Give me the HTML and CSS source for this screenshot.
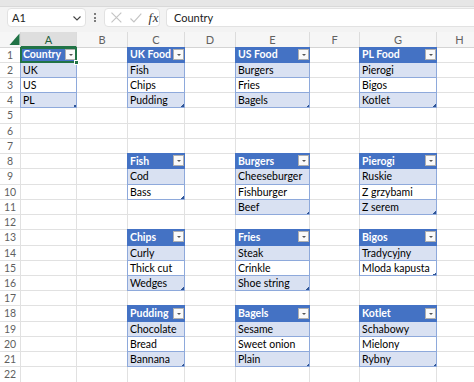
FILE: index.html
```html
<!DOCTYPE html>
<html>
<head>
<meta charset="utf-8">
<link rel="stylesheet" href="styles.css">
</head>
<body>
<div class="app">
  <div class="ribbon"></div>
  <div class="fbar">
    <div class="namebox"><span>A1</span><svg class="chev" width="8" height="5" viewBox="0 0 8 5"><polyline points="0.5,0.5 4,4 7.5,0.5" fill="none" stroke="#444" stroke-width="1.1"/></svg></div>
    <div class="dots"><i></i><i></i><i></i></div>
    <div class="fxbox">
      <svg width="11" height="11" viewBox="0 0 11 11"><path d="M0.5 0.5 L10.5 10.5 M10.5 0.5 L0.5 10.5" stroke="#c4c4c4" stroke-width="1.2"/></svg>
      <svg width="12" height="10" viewBox="0 0 12 10"><polyline points="0.5,5.5 4,9 11.5,0.5" fill="none" stroke="#c4c4c4" stroke-width="1.2"/></svg>
      <span class="fx">fx</span>
    </div>
    <div class="formula">Country</div>
  </div>
  <div class="sheet">
    <div class="cl c1"></div><div class="cl c2"></div><div class="cl c3"></div><div class="cl c4"></div><div class="cl c5"></div><div class="cl c6"></div><div class="cl c7"></div><div class="cl c8"></div><div class="cl c9"></div>

    <div class="rl g1"><span class="rn">1</span></div>
    <div class="rl g2"><span class="rn">2</span></div>
    <div class="rl g3"><span class="rn">3</span></div>
    <div class="rl g4"><span class="rn">4</span></div>
    <div class="rl g5"><span class="rn">5</span></div>
    <div class="rl g6"><span class="rn">6</span></div>
    <div class="rl g7"><span class="rn">7</span></div>
    <div class="rl g8"><span class="rn">8</span></div>
    <div class="rl g9"><span class="rn">9</span></div>
    <div class="rl g10"><span class="rn">10</span></div>
    <div class="rl g11"><span class="rn">11</span></div>
    <div class="rl g12"><span class="rn">12</span></div>
    <div class="rl g13"><span class="rn">13</span></div>
    <div class="rl g14"><span class="rn">14</span></div>
    <div class="rl g15"><span class="rn">15</span></div>
    <div class="rl g16"><span class="rn">16</span></div>
    <div class="rl g17"><span class="rn">17</span></div>
    <div class="rl g18"><span class="rn">18</span></div>
    <div class="rl g19"><span class="rn">19</span></div>
    <div class="rl g20"><span class="rn">20</span></div>
    <div class="rl g21"><span class="rn">21</span></div>
    <div class="rl g22"><span class="rn">22</span></div>

    <div class="corner c1"><svg width="21" height="16" viewBox="0 0 21 16"><polygon points="9.5,13 19.5,13 19.5,1.5" fill="#217346"/></svg></div>
    <div class="ch c2 sel-col">A</div>
    <div class="ch c3">B</div>
    <div class="ch c4">C</div>
    <div class="ch c5">D</div>
    <div class="ch c6">E</div>
    <div class="ch c7">F</div>
    <div class="ch c8">G</div>
    <div class="ch c9">H</div>

    <div class="tbl c2 row1 span4">
      <div class="tr th"><span>Country</span><b class="dd"></b></div>
      <div class="tr odd">UK</div>
      <div class="tr">US</div>
      <div class="tr odd last">PL</div>
    </div>
    <div class="tbl c4 row1 span4">
      <div class="tr th"><span>UK Food</span><b class="dd"></b></div>
      <div class="tr odd">Fish</div>
      <div class="tr">Chips</div>
      <div class="tr odd last">Pudding</div>
    </div>
    <div class="tbl c6 row1 span4">
      <div class="tr th"><span>US Food</span><b class="dd"></b></div>
      <div class="tr odd">Burgers</div>
      <div class="tr">Fries</div>
      <div class="tr odd last">Bagels</div>
    </div>
    <div class="tbl c8 row1 span4">
      <div class="tr th"><span>PL Food</span><b class="dd"></b></div>
      <div class="tr odd">Pierogi</div>
      <div class="tr">Bigos</div>
      <div class="tr odd last">Kotlet</div>
    </div>

    <div class="tbl c4 row8 span3">
      <div class="tr th"><span>Fish</span><b class="dd"></b></div>
      <div class="tr odd">Cod</div>
      <div class="tr last">Bass</div>
    </div>
    <div class="tbl c6 row8 span4">
      <div class="tr th"><span>Burgers</span><b class="dd"></b></div>
      <div class="tr odd">Cheeseburger</div>
      <div class="tr">Fishburger</div>
      <div class="tr odd last">Beef</div>
    </div>
    <div class="tbl c8 row8 span4">
      <div class="tr th"><span>Pierogi</span><b class="dd"></b></div>
      <div class="tr odd">Ruskie</div>
      <div class="tr">Z grzybami</div>
      <div class="tr odd last">Z serem</div>
    </div>

    <div class="tbl c4 row13 span4">
      <div class="tr th"><span>Chips</span><b class="dd"></b></div>
      <div class="tr odd">Curly</div>
      <div class="tr">Thick cut</div>
      <div class="tr odd last">Wedges</div>
    </div>
    <div class="tbl c6 row13 span4">
      <div class="tr th"><span>Fries</span><b class="dd"></b></div>
      <div class="tr odd">Steak</div>
      <div class="tr">Crinkle</div>
      <div class="tr odd last">Shoe string</div>
    </div>
    <div class="tbl c8 row13 span3">
      <div class="tr th"><span>Bigos</span><b class="dd"></b></div>
      <div class="tr odd">Tradycyjny</div>
      <div class="tr last">Mloda kapusta</div>
    </div>

    <div class="tbl c4 row18 span4">
      <div class="tr th"><span>Pudding</span><b class="dd"></b></div>
      <div class="tr odd">Chocolate</div>
      <div class="tr">Bread</div>
      <div class="tr odd last">Bannana</div>
    </div>
    <div class="tbl c6 row18 span4">
      <div class="tr th"><span>Bagels</span><b class="dd"></b></div>
      <div class="tr odd">Sesame</div>
      <div class="tr">Sweet onion</div>
      <div class="tr odd last">Plain</div>
    </div>
    <div class="tbl c8 row18 span4">
      <div class="tr th"><span>Kotlet</span><b class="dd"></b></div>
      <div class="tr odd">Schabowy</div>
      <div class="tr">Mielony</div>
      <div class="tr odd last">Rybny</div>
    </div>

    <div class="selection c2 g1"><i class="handle"></i></div>
  </div>
</div>
</body>
</html>
```

FILE: styles.css
```css
* { box-sizing: border-box; margin: 0; padding: 0; }
html, body { width: 474px; height: 382px; overflow: hidden; background: #fff; }
body { font-family: "Lato", "Liberation Sans", sans-serif; color: #000; }

.app { width: 474px; height: 382px; overflow: hidden; display: flex; flex-direction: column; }

.ribbon { height: 7px; flex: none; background: #e6e6e6; border-bottom: 1px solid #d9d9d9; }

.fbar { height: 24.5px; flex: none; background: #f3f3f3; display: flex; align-items: flex-start; padding: 1px 0 0 7px; }
.namebox { width: 79px; height: 19px; background: #fff; border: 1px solid #e2e2e2; border-radius: 4px; display: flex; align-items: center; justify-content: space-between; padding: 0 4px 0 4px; font-size: 11px; color: #222; }
.namebox .chev { margin-top: 1px; }
.dots { width: 18px; height: 19px; display: flex; flex-direction: column; align-items: center; justify-content: center; gap: 1.5px; }
.dots i { width: 2px; height: 2px; background: #555; border-radius: 1px; display: block; }
.fxbox { width: 56px; height: 19px; background: #fff; border: 1px solid #e2e2e2; border-radius: 4px; display: flex; align-items: center; padding-left: 6px; gap: 8px; }
.fx { font-family: "Liberation Serif", serif; font-style: italic; font-size: 13px; color: #333; margin-left: -1px; letter-spacing: 0.5px; }
.formula { flex: 1; height: 19px; margin-left: 6px; background: #fff; border: 1px solid #e2e2e2; border-right: none; border-radius: 4px 0 0 4px; font-size: 11px; line-height: 17px; padding-left: 7px; color: #222; }

.sheet {
  --rh: 15.24px;
  width: 483px; flex: none;
  display: grid;
  grid-template-columns: 21px 56px 51px 57px 51px 74px 50px 77px 46px;
  grid-template-rows: 16px repeat(22, var(--rh));
  font-size: 10.5px;
}

.c1 { grid-column: 1; } .c2 { grid-column: 2; } .c3 { grid-column: 3; } .c4 { grid-column: 4; } .c5 { grid-column: 5; }
.c6 { grid-column: 6; } .c7 { grid-column: 7; } .c8 { grid-column: 8; } .c9 { grid-column: 9; }

.g1 { grid-row: 2; } .g2 { grid-row: 3; } .g3 { grid-row: 4; } .g4 { grid-row: 5; } .g5 { grid-row: 6; }
.g6 { grid-row: 7; } .g7 { grid-row: 8; } .g8 { grid-row: 9; } .g9 { grid-row: 10; } .g10 { grid-row: 11; }
.g11 { grid-row: 12; } .g12 { grid-row: 13; } .g13 { grid-row: 14; } .g14 { grid-row: 15; } .g15 { grid-row: 16; }
.g16 { grid-row: 17; } .g17 { grid-row: 18; } .g18 { grid-row: 19; } .g19 { grid-row: 20; } .g20 { grid-row: 21; }
.g21 { grid-row: 22; } .g22 { grid-row: 23; }

.cl { grid-row: 1 / -1; border-right: 1px solid #e1e1e1; }
.rl { grid-column: 1 / -1; border-bottom: 1px solid #e1e1e1; display: flex; }
.rn { width: 20px; text-align: center; color: #5f5f5f; line-height: var(--rh); font-size: 10.5px; }

.corner { grid-row: 1; background: #f6f6f6; border-right: 1px solid #d8d8d8; border-bottom: 1px solid #d8d8d8; }
.corner svg { display: block; }
.ch { grid-row: 1; background: #f6f6f6; border-right: 1px solid #dcdcdc; border-bottom: 1px solid #d4d4d4; color: #616161; text-align: center; font-size: 11px; line-height: 15px; }
.ch.sel-col { background: #dedede; border-bottom: 2px solid #217346; color: #1e5e3a; }

.row1 { grid-row-start: 2; } .row8 { grid-row-start: 9; } .row13 { grid-row-start: 14; } .row18 { grid-row-start: 19; }
.span3 { grid-row-end: span 3; } .span4 { grid-row-end: span 4; }

.tbl { margin: -1px 0 0 -1px; display: flex; flex-direction: column; align-self: start; }
.tr { height: var(--rh); border: solid #8ea9db; border-width: 0 1px 1px 1px; padding-left: 2px; line-height: 14px; white-space: nowrap; position: relative; background: #fff; }
.tr.odd { background: #d9e1f2; }
.tr.th { height: calc(var(--rh) + 1px); background: #4472c4; border-color: #4472c4; color: #fff; font-weight: 700; display: flex; align-items: center; justify-content: space-between; line-height: 16px; }
.tr.th span { line-height: 15px; padding-top: 1px; }
.dd { width: 11px; height: 11px; background: #fafafa; border: 1px solid #b0b0b0; display: block; position: relative; flex: none; }
.dd::after { content: ""; position: absolute; left: 3px; top: 4px; border-left: 2px solid transparent; border-right: 2px solid transparent; border-top: 2px solid #555; }
.tr.last::after { content: ""; position: absolute; right: 0; bottom: 0; width: 3px; height: 3px; background: linear-gradient(to bottom right, transparent 50%, #2f5597 50%); }

.selection { margin: -1px 0 0 -1px; border: 2px solid #217346; position: relative; }
.handle { position: absolute; right: -4px; bottom: -4px; width: 5px; height: 5px; background: #217346; border: 1px solid #fff; display: block; }
```
